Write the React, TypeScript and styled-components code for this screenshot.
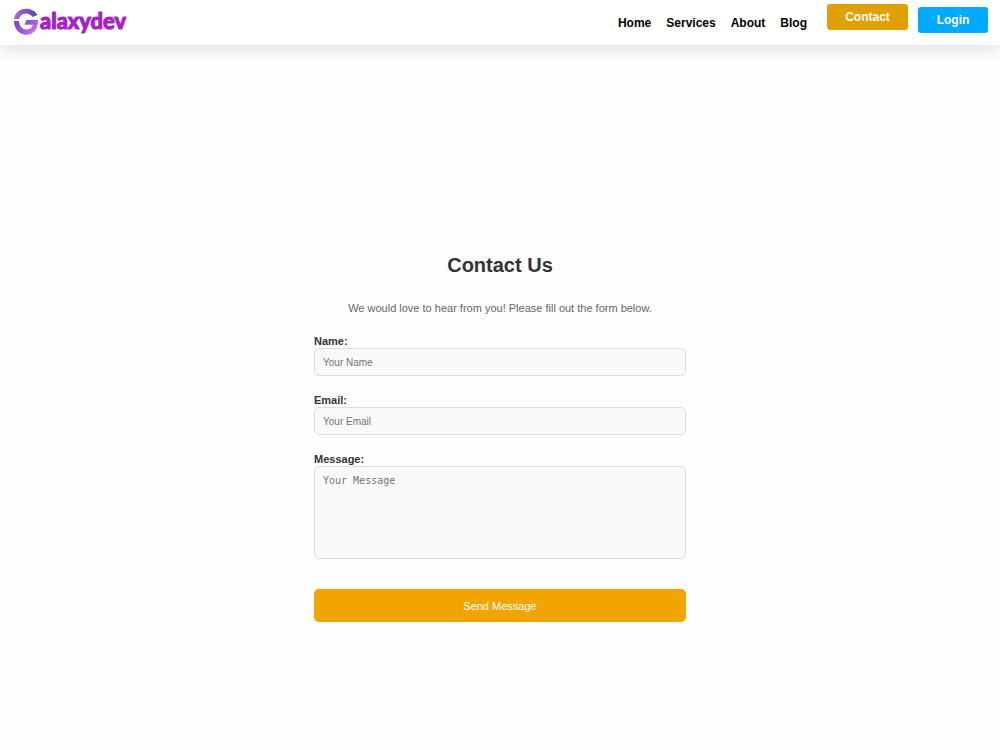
import React from "react";
import styled, { createGlobalStyle } from "styled-components";

const GlobalStyle = createGlobalStyle`
  *, *::before, *::after { box-sizing: border-box; }
  body {
    margin: 0;
    background: #fefefe;
    color: #333;
    font-family: "Liberation Sans", Arial, sans-serif;
  }
`;

const Page = styled.div`
  display: flex;
  flex-direction: column;
  min-height: 100vh;
`;

const Header = styled.header`
  display: flex;
  align-items: flex-start;
  justify-content: space-between;
  height: 45px;
  padding: 4px 12px 0;
  background: #fff;
  box-shadow: 0 5px 15px rgba(0, 0, 0, 0.12);
`;

const Brand = styled.a`
  display: block;
  height: 34px;
`;

const Nav = styled.nav`
  display: flex;
  align-items: flex-start;
`;

const Links = styled.div`
  display: flex;
  gap: 15px;
  margin: 12px 20px 0 0;
`;

const NavLink = styled.a`
  color: #000;
  font-size: 12px;
  font-weight: 700;
  line-height: 14px;
  text-decoration: none;
`;

const Actions = styled.div`
  display: flex;
  gap: 10px;
`;

const Action = styled.button<{ $color: string; $width: number; $lowered?: boolean }>`
  width: ${(p) => p.$width}px;
  height: 26px;
  margin-top: ${(p) => (p.$lowered ? 3 : 0)}px;
  padding: 0;
  border: 0;
  border-radius: 3px;
  background: ${(p) => p.$color};
  color: #fff;
  font: 700 12px/26px "Liberation Sans", Arial, sans-serif;
  cursor: pointer;
`;

const Main = styled.main`
  display: flex;
  flex: 1;
  flex-direction: column;
  align-items: center;
  justify-content: center;
  padding: 88px 20px 8px;
`;

const Panel = styled.section`
  width: 100%;
  max-width: 372px;
`;

const Title = styled.h1`
  margin: 0 0 24px;
  font-size: 20px;
  line-height: 24px;
  text-align: center;
`;

const Intro = styled.p`
  margin: 0 0 19px;
  color: #666;
  font-size: 11px;
  line-height: 14px;
  text-align: center;
`;

const Form = styled.form`
  display: flex;
  flex-direction: column;
`;

const Field = styled.div`
  display: flex;
  flex-direction: column;
  margin-bottom: 17px;
`;

const Label = styled.label`
  font-size: 11px;
  font-weight: 700;
  line-height: 14px;
`;

const Input = styled.input`
  height: 28px;
  padding: 0 8px;
  border: 1px solid #ddd;
  border-radius: 5px;
  background: #f9f9f9;
  color: #333;
  font: 10px "Liberation Sans", Arial, sans-serif;
  &::placeholder { color: #757575; }
`;

const TextArea = styled.textarea`
  height: 93px;
  padding: 8px;
  border: 1px solid #ddd;
  border-radius: 5px;
  background: #f9f9f9;
  color: #333;
  font: 10px "DejaVu Sans Mono", monospace;
  resize: none;
  &::placeholder { color: #757575; }
`;

const Submit = styled.button`
  height: 33px;
  margin-top: 13px;
  border: 0;
  border-radius: 5px;
  background: #f2a500;
  color: #fff;
  font: 11px "Liberation Sans", Arial, sans-serif;
  cursor: pointer;
`;

function Logo() {
  return (
    <svg width="118" height="34" viewBox="0 0 118 34" role="img" aria-label="Galaxydev">
      <defs>
        <linearGradient id="mark" x1="0" y1="0" x2="1" y2="0.6">
          <stop offset="0" stopColor="#6f45b8" />
          <stop offset="0.45" stopColor="#8a55cc" />
          <stop offset="1" stopColor="#cf6cf0" />
        </linearGradient>
        <linearGradient id="arc" x1="0" y1="0" x2="1" y2="0">
          <stop offset="0" stopColor="#a468dc" />
          <stop offset="1" stopColor="#6340ac" />
        </linearGradient>
      </defs>
      <path
        fill="url(#arc)"
        d="M2 15C2.600 9 7.700 4.700 14 4.700C19.200 4.700 23.300 7 25.500 11L20.500 13C19 10.600 16.800 9.400 14 9.400C10.400 9.400 8 11.600 7 15Z"
      />
      <path
        fill="url(#mark)"
        d="M2 17H7C7.600 22.400 10.300 25.500 14.200 25.500C17.400 25.500 19.900 24.200 20.800 20.700H12.500L14.500 16H26C26.500 24.800 21.500 30.700 14.200 30.700C7.500 30.700 2.200 25.300 2 17Z"
      />
      <text
        x="28"
        y="25"
        fill="#a81fc9"
        stroke="#a81fc9"
        strokeWidth="1.2"
        strokeLinejoin="round"
        fontFamily="Lato, sans-serif"
        fontSize="22"
        fontWeight="700"
      >
        alaxydev
      </text>
    </svg>
  );
}

const links = ["Home", "Services", "About", "Blog"];

export default function App() {
  return (
    <Page>
      <GlobalStyle />
      <Header>
        <Brand href="#">
          <Logo />
        </Brand>
        <Nav>
          <Links>
            {links.map((name) => (
              <NavLink key={name} href={`#${name.toLowerCase()}`}>
                {name}
              </NavLink>
            ))}
          </Links>
          <Actions>
            <Action type="button" $color="#e0a000" $width={81}>
              Contact
            </Action>
            <Action type="button" $color="#00aaff" $width={70} $lowered>
              Login
            </Action>
          </Actions>
        </Nav>
      </Header>
      <Main>
        <Panel>
          <Title>Contact Us</Title>
          <Intro>We would love to hear from you! Please fill out the form below.</Intro>
          <Form onSubmit={(e) => e.preventDefault()}>
            <Field>
              <Label htmlFor="name">Name:</Label>
              <Input id="name" type="text" placeholder="Your Name" />
            </Field>
            <Field>
              <Label htmlFor="email">Email:</Label>
              <Input id="email" type="email" placeholder="Your Email" />
            </Field>
            <Field>
              <Label htmlFor="message">Message:</Label>
              <TextArea id="message" placeholder="Your Message" />
            </Field>
            <Submit type="submit">Send Message</Submit>
          </Form>
        </Panel>
      </Main>
    </Page>
  );
}
